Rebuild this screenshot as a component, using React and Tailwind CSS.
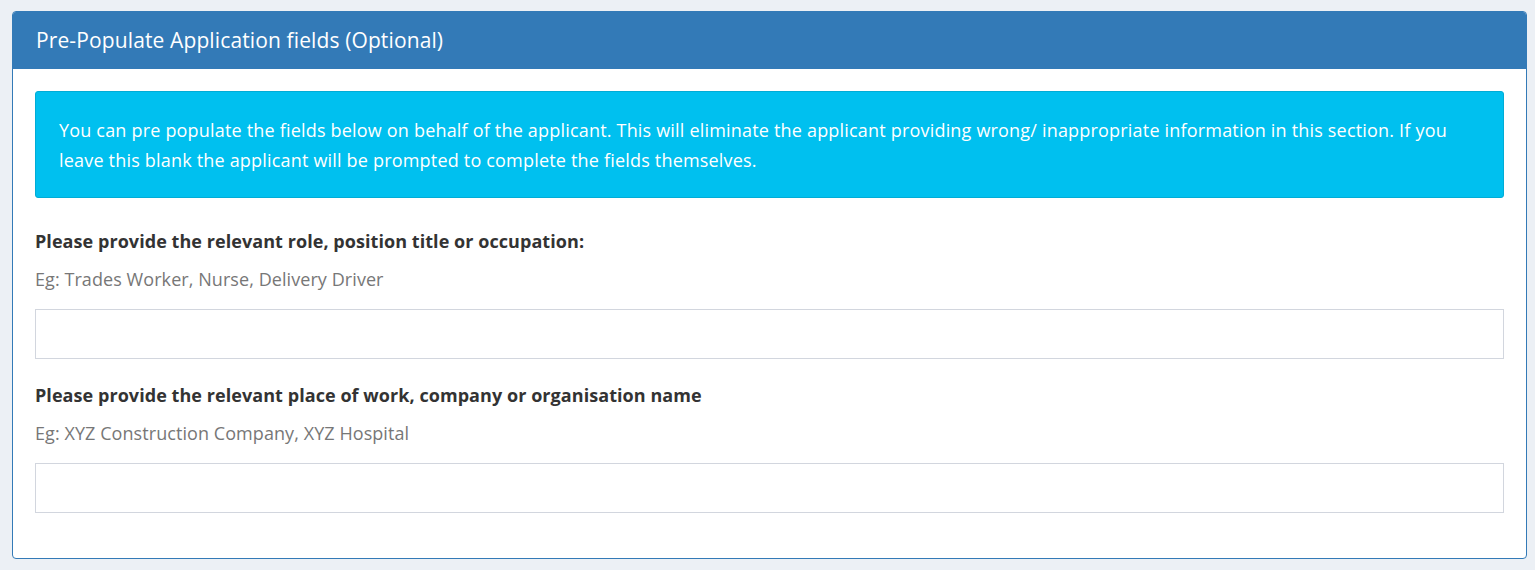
export default function App() {
  const font = { fontFamily: '"Open Sans", "Liberation Sans", sans-serif' };
  return (
    <div className="min-h-[570px] bg-[#ecf0f5] pt-[11px] pl-[12px] pr-[8px] pb-[12px]" style={font}>
      <div className="rounded-[4px] border border-[#337ab7] bg-white overflow-hidden">
        <div className="h-[57px] bg-[#337ab7] flex items-center px-[23px]">
          <h3 className="text-[21px] text-white leading-none tracking-[0.12px]">Pre-Populate Application fields (Optional)</h3>
        </div>
        <div className="px-[22px] pt-[22px] pb-[45px]">
          <div className="rounded-[3px] border border-[#00acd6] bg-[#00c0ef] px-[23px] pt-[23px] pb-[22px] text-white text-[18px] leading-[30px] tracking-[0.19px]">
            You can pre populate the fields below on behalf of the applicant. This will eliminate the applicant providing wrong/ inappropriate information in this section. If you leave this blank the applicant will be prompted to complete the fields themselves.
          </div>
          <div className="mt-[30px]">
            <div className="text-[18px] font-bold text-[#333] leading-[26px] tracking-[0.06px]">Please provide the relevant role, position title or occupation:</div>
            <div className="mt-[12px] text-[18px] text-[#777] leading-[26px] tracking-[0.07px]">Eg: Trades Worker, Nurse, Delivery Driver</div>
            <div className="mt-[17px] h-[50px] border border-[#d2d6de]"></div>
          </div>
          <div className="mt-[23px]">
            <div className="text-[18px] font-bold text-[#333] leading-[26px] tracking-[0.06px]">Please provide the relevant place of work, company or organisation name</div>
            <div className="mt-[12px] text-[18px] text-[#777] leading-[26px] tracking-[0.07px]">Eg: XYZ Construction Company, XYZ Hospital</div>
            <div className="mt-[17px] h-[50px] border border-[#d2d6de]"></div>
          </div>
        </div>
      </div>
    </div>
  );
}
